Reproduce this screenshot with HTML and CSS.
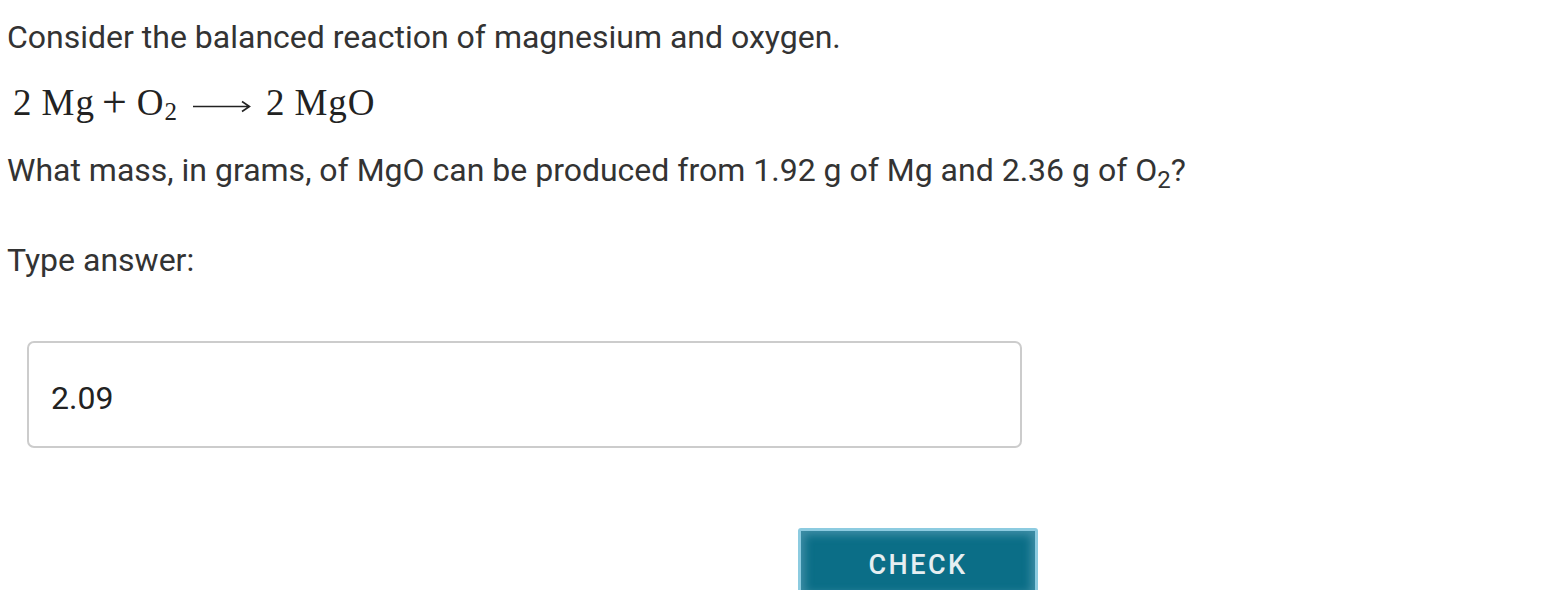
FILE: index.html
```html
<!DOCTYPE html>
<html lang="en">
<head>
	<meta charset="UTF-8">
	<title>Question</title>
	<link rel="stylesheet" href="styles.css">
</head>
<body>
	<div class="question">
		<p class="intro">Consider the balanced reaction of magnesium and oxygen.</p>
		<p class="math">2<span class="sp"></span>Mg<span class="op">+</span>O<sub>2</sub><svg class="arrow" width="58" height="16" viewBox="0 0 58 16"><path d="M0 8.5H56M49 3.5L56.5 8.5L49 13.5" fill="none" stroke="#222" stroke-width="1.6"/></svg>2<span class="sp"></span>MgO</p>
		<p class="ask">What mass, in grams, of MgO can be produced from 1.92 g of Mg and 2.36 g of O<sub>2</sub>?</p>
		<p class="label">Type answer:</p>
		<div class="answer">
			<input type="text" value="2.09">
		</div>
		<div class="actions">
			<button class="check">CHECK</button>
		</div>
	</div>
</body>
</html>
```

FILE: styles.css
```css
*{
	margin:0px;
	padding: 0px;
}
body{
	font-family: Roboto, "Liberation Sans", sans-serif;
	color: #333;
	background: #fff;
}
.question{
	padding: 18px 0 0 7px;
	font-size: 32px;
}
.intro{
	line-height: 38px;
}
.math{
	font-family: "Liberation Serif", "DejaVu Serif", serif;
	font-size: 37px;
	line-height: 44px;
	margin-top: 25px;
	padding-left: 6px;
	color: #222;
	letter-spacing: 1px;
	white-space: nowrap;
}
.math .sp{
	display: inline-block;
	width: 9px;
}
.math .op{
	font-size: 44px;
	margin: 0 9px 0 7px;
	vertical-align: -2px;
	line-height: 0;
}
.math sub{
	font-size: 25px;
	vertical-align: -5px;
	line-height: 0;
}
.arrow{
	margin: 0 15px 0 15px;
	vertical-align: 1px;
}
.ask{
	line-height: 38px;
	margin-top: 26px;
}
.ask sub{
	font-size: 24px;
	vertical-align: -7px;
	line-height: 0;
}
.label{
	line-height: 38px;
	margin-top: 52px;
}
.answer{
	margin: 62px 0 0 20px;
	width: 995px;
}
.answer input{
	display: block;
	width: 100%;
	height: 107px;
	border: 2px solid #ccc;
	border-radius: 7px;
	padding: 6px 22px 0;
	box-sizing: border-box;
	font-family: Roboto, "Liberation Sans", sans-serif;
	font-size: 32px;
	color: #222;
	outline: none;
}
.actions{
	margin-top: 80px;
	padding-left: 791px;
}
.check{
	width: 240px;
	height: 72px;
	background: #0b6e87;
	border: 3px solid #8ccbe0;
	border-radius: 3px 3px 0 0;
	box-shadow: inset 0 0 8px 4px #3f8ea6;
	color: #e6eef1;
	font-family: Roboto, "Liberation Sans", sans-serif;
	font-size: 27px;
	font-weight: 500;
	letter-spacing: 2.5px;
	padding-top: 2px;
	cursor: pointer;
}
```
